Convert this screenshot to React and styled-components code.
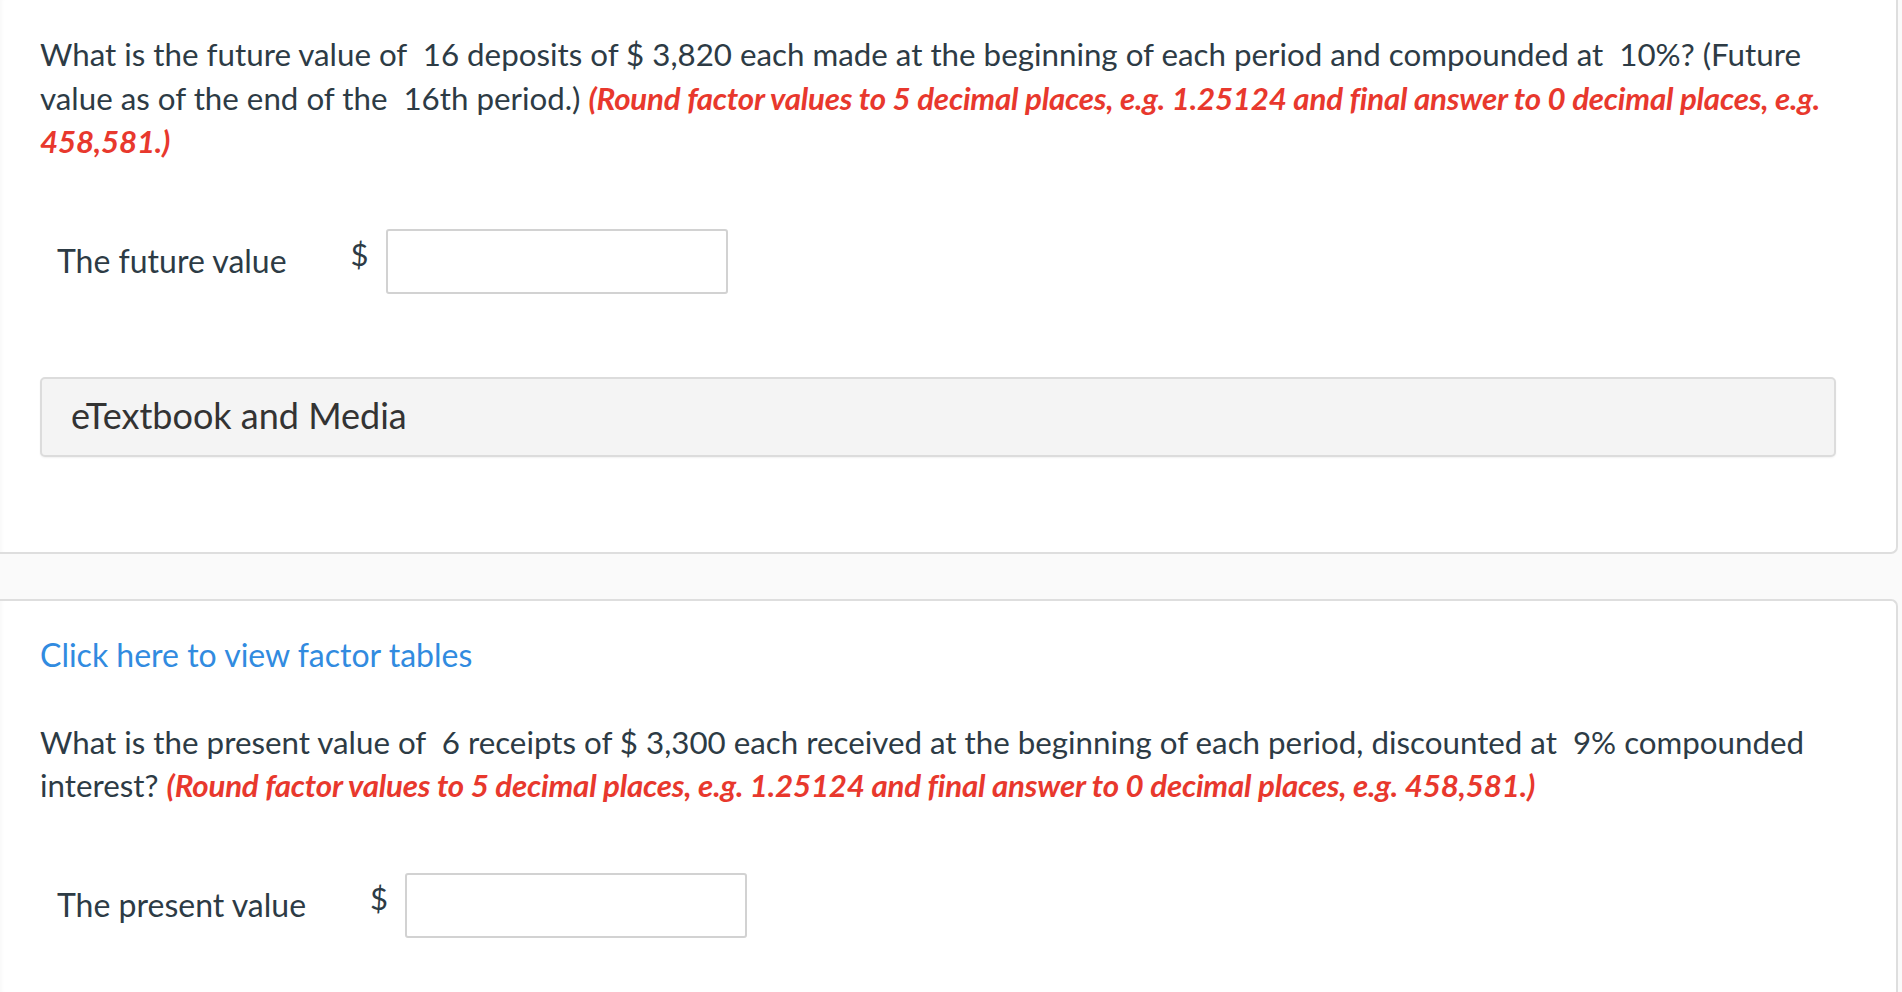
import React from 'react';
import styled, { createGlobalStyle } from 'styled-components';

const GlobalStyle = createGlobalStyle`
  html, body {
    margin: 0;
    padding: 0;
    background: #fafafa;
    font-family: Lato, "Open Sans", "Liberation Sans", sans-serif;
    color: #2d3b45;
  }
`;

const Page = styled.div`
  display: flex;
  flex-direction: column;
  gap: 45px;
  height: 100vh;
  padding-right: 4px;
  overflow: hidden;
`;

const Card = styled.section`
  flex: ${props => (props.$last ? '1 0 auto' : '0 0 auto')};
  background: #fff;
  border: 2px solid #dedede;
  border-left: none;
  border-top: ${props => (props.$first ? 'none' : '2px solid #dedede')};
  border-bottom: ${props => (props.$last ? 'none' : '2px solid #dedede')};
  border-radius: ${props => (props.$first ? '0 0 7px 0' : '0 7px 0 0')};
  box-shadow: inset 5px 0 5px -4px rgba(0, 0, 0, 0.04);
  padding: ${props => (props.$first ? '33px 60px 95px 40px' : '28px 60px 0 40px')};
`;

const Link = styled.a`
  display: block;
  font-size: 32px;
  line-height: 51px;
  color: #318be0;
  text-decoration: none;
  margin-bottom: 41px;
  cursor: pointer;
`;

const Question = styled.p`
  margin: 0;
  font-size: 31.3px;
  line-height: 43.5px;
  color: #2d3b45;
`;

const Hint = styled.strong`
  font-style: italic;
  font-weight: 700;
  color: #e8382d;
  letter-spacing: -0.2px;
`;

const AnswerRow = styled.div`
  display: flex;
  align-items: center;
  margin-top: 65px;
  padding-left: 17px;
`;

const Label = styled.span`
  font-size: 32px;
  line-height: 43.5px;
  margin-right: 64px;
`;

const Dollar = styled.span`
  font-size: 31px;
  line-height: 43.5px;
  width: 35px;
  padding-bottom: 12px;
`;

const Input = styled.input`
  box-sizing: border-box;
  width: 342px;
  height: 65px;
  border: 2px solid #d2d2d2;
  border-radius: 3px;
  background: #fff;
  font-family: inherit;
  font-size: 29px;
  padding: 0 10px;
  outline: none;
`;

const MediaPanel = styled.div`
  margin-top: 83px;
  height: 80px;
  box-sizing: border-box;
  background: #f4f4f4;
  border: 2px solid #dcdcdc;
  border-radius: 5px;
  box-shadow: 0 1px 2px rgba(0, 0, 0, 0.06);
  padding: 15px 0 0 29px;
  font-size: 36px;
  line-height: 42px;
  color: #333;
`;

const HINT = '(Round factor values to 5 decimal places, e.g. 1.25124 and final answer to 0 decimal places, e.g. 458,581.)';

const Answer = ({ label }) => (
  <AnswerRow>
    <Label>{label}</Label>
    <Dollar>$</Dollar>
    <Input type="text" />
  </AnswerRow>
);

export default function App() {
  return (
    <Page>
      <GlobalStyle />
      <Card $first>
        <Question>
          What is the future value of&nbsp; 16 deposits of $ 3,820 each made at the beginning of each period and compounded at&nbsp; 10%? (Future value as of the end of the&nbsp; 16th period.) <Hint>{HINT}</Hint>
        </Question>
        <Answer label="The future value" />
        <MediaPanel>eTextbook and Media</MediaPanel>
      </Card>
      <Card $last>
        <Link>Click here to view factor tables</Link>
        <Question>
          What is the present value of&nbsp; 6 receipts of $ 3,300 each received at the beginning of each period, discounted at&nbsp; 9% compounded interest? <Hint>{HINT}</Hint>
        </Question>
        <Answer label="The present value" />
      </Card>
    </Page>
  );
}
